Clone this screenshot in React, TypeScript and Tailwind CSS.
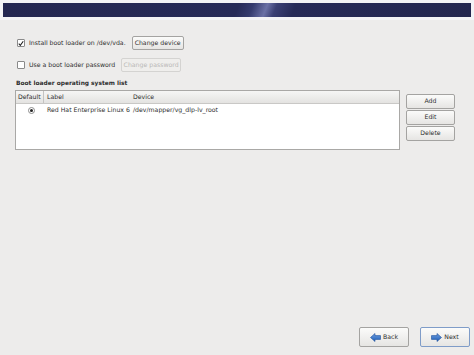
import React from 'react';

const font = { fontFamily: '"DejaVu Sans", Verdana, sans-serif' };

function Check({ checked }: { checked?: boolean }) {
  return (
    <div className="w-[8px] h-[8px] border border-[#8a8a8a] bg-white rounded-[1px] flex items-center justify-center shrink-0">
      {checked && (
        <svg width="7" height="7" viewBox="0 0 8 8">
          <path d="M1 4.2 L3.1 6.5 L7 1" fill="none" stroke="#222" strokeWidth="1.4" />
        </svg>
      )}
    </div>
  );
}

function Btn({ children, disabled, className = '' }: { children: React.ReactNode; disabled?: boolean; className?: string }) {
  return (
    <div
      className={`flex items-center justify-center whitespace-nowrap rounded-[2px] border text-[6.2px] leading-none ${
        disabled
          ? 'border-[#d4d3d1] text-[#b9b8b6] bg-[#efeeec]'
          : 'border-[#a4a3a1] text-[#2e2e2e] bg-[linear-gradient(#fbfbfa,#e6e5e3)]'
      } ${className}`}
    >
      {children}
    </div>
  );
}

function Arrow({ dir }: { dir: 'left' | 'right' }) {
  return (
    <svg width="11" height="9" viewBox="0 0 11 9">
      <defs>
        <linearGradient id={`g-${dir}`} x1="0" y1="0" x2="0" y2="1">
          <stop offset="0" stopColor="#6f9fe0" />
          <stop offset="1" stopColor="#1f5fb8" />
        </linearGradient>
      </defs>
      {dir === 'left' ? (
        <path d="M0.5 4.5 L5 0.5 L5 2.6 L10.5 2.6 L10.5 6.4 L5 6.4 L5 8.5 Z" fill={`url(#g-${dir})`} stroke="#1c4f9a" strokeWidth="0.6" />
      ) : (
        <path d="M10.5 4.5 L6 0.5 L6 2.6 L0.5 2.6 L0.5 6.4 L6 6.4 L6 8.5 Z" fill={`url(#g-${dir})`} stroke="#1c4f9a" strokeWidth="0.6" />
      )}
    </svg>
  );
}

export default function App() {
  return (
    <div className="w-[474px] h-[355px] bg-[#edeceb] flex flex-col text-[#2e2e2e] overflow-hidden whitespace-nowrap" style={font}>
      {/* banner */}
      <div className="bg-[#f3f3f6] p-[3px]">
        <div className="h-[14px] bg-[linear-gradient(112deg,#242752_0%,#262a58_50%,#343a6e_53%,#6a70a6_56%,#3a3f74_58%,#262a58_62%,#23264f_100%)]" />
      </div>

      <div className="flex-1 flex flex-col pl-[15px] pr-[4px]">
        {/* options */}
        <div className="mt-[16px] flex items-center h-[14px] pl-[2px]">
          <Check checked />
          <span className="ml-[4px] text-[6.2px]">Install boot loader on /dev/vda.</span>
          <Btn className="ml-[6px] w-[52px] h-[14px]">Change device</Btn>
        </div>
        <div className="mt-[8px] flex items-center h-[14px] pl-[2px]">
          <Check />
          <span className="ml-[4px] text-[6.2px]">Use a boot loader password</span>
          <Btn disabled className="ml-[6px] w-[60px] h-[14px]">Change password</Btn>
        </div>

        <div className="mt-[7px] ml-[1px] text-[5.9px] font-bold leading-[9px]">Boot loader operating system list</div>

        <div className="mt-[2px] flex items-start">
          {/* table */}
          <div className="w-[385px] h-[60px] border border-[#a9a8a6] bg-white">
            <div className="h-[13px] flex items-center text-[6.2px] border-b border-[#c9c8c6] bg-[linear-gradient(#f6f6f5,#e4e3e1)]">
              <div className="w-[28px] shrink-0 pl-[2px] border-r border-[#c4c3c1] h-full flex items-center">Default</div>
              <div className="w-[86px] shrink-0 pl-[3px] h-full flex items-center">Label</div>
              <div className="pl-[3px] h-full flex items-center">Device</div>
            </div>
            <div className="h-[12px] flex items-center text-[6.2px]">
              <div className="w-[29px] shrink-0 flex justify-center pl-[2px]">
                <div className="w-[7px] h-[7px] rounded-full border border-[#8d8d8d] bg-white flex items-center justify-center">
                  <div className="w-[3px] h-[3px] rounded-full bg-[#222]" />
                </div>
              </div>
              <div className="w-[86px] shrink-0 pl-[2px]">Red Hat Enterprise Linux 6</div>
              <div className="pl-[2px]">/dev/mapper/vg_dlp-lv_root</div>
            </div>
          </div>

          {/* side buttons */}
          <div className="ml-[6px] mt-[4px] flex flex-col gap-[1px]">
            <Btn className="w-[49px] h-[15px]">Add</Btn>
            <Btn className="w-[49px] h-[15px]">Edit</Btn>
            <Btn className="w-[49px] h-[15px]">Delete</Btn>
          </div>
        </div>

        {/* nav */}
        <div className="mt-auto mb-[8px] flex justify-end gap-[11px]">
          <Btn className="w-[50px] h-[20px] gap-[2px]">
            <Arrow dir="left" />
            <span>Back</span>
          </Btn>
          <div className="w-[50px] h-[20px] rounded-[2px] border border-[#7f9cc8] bg-[linear-gradient(#fbfbfa,#e6e5e3)] flex items-center justify-center gap-[2px] text-[6.2px]">
            <Arrow dir="right" />
            <span>Next</span>
          </div>
        </div>
      </div>
    </div>
  );
}
